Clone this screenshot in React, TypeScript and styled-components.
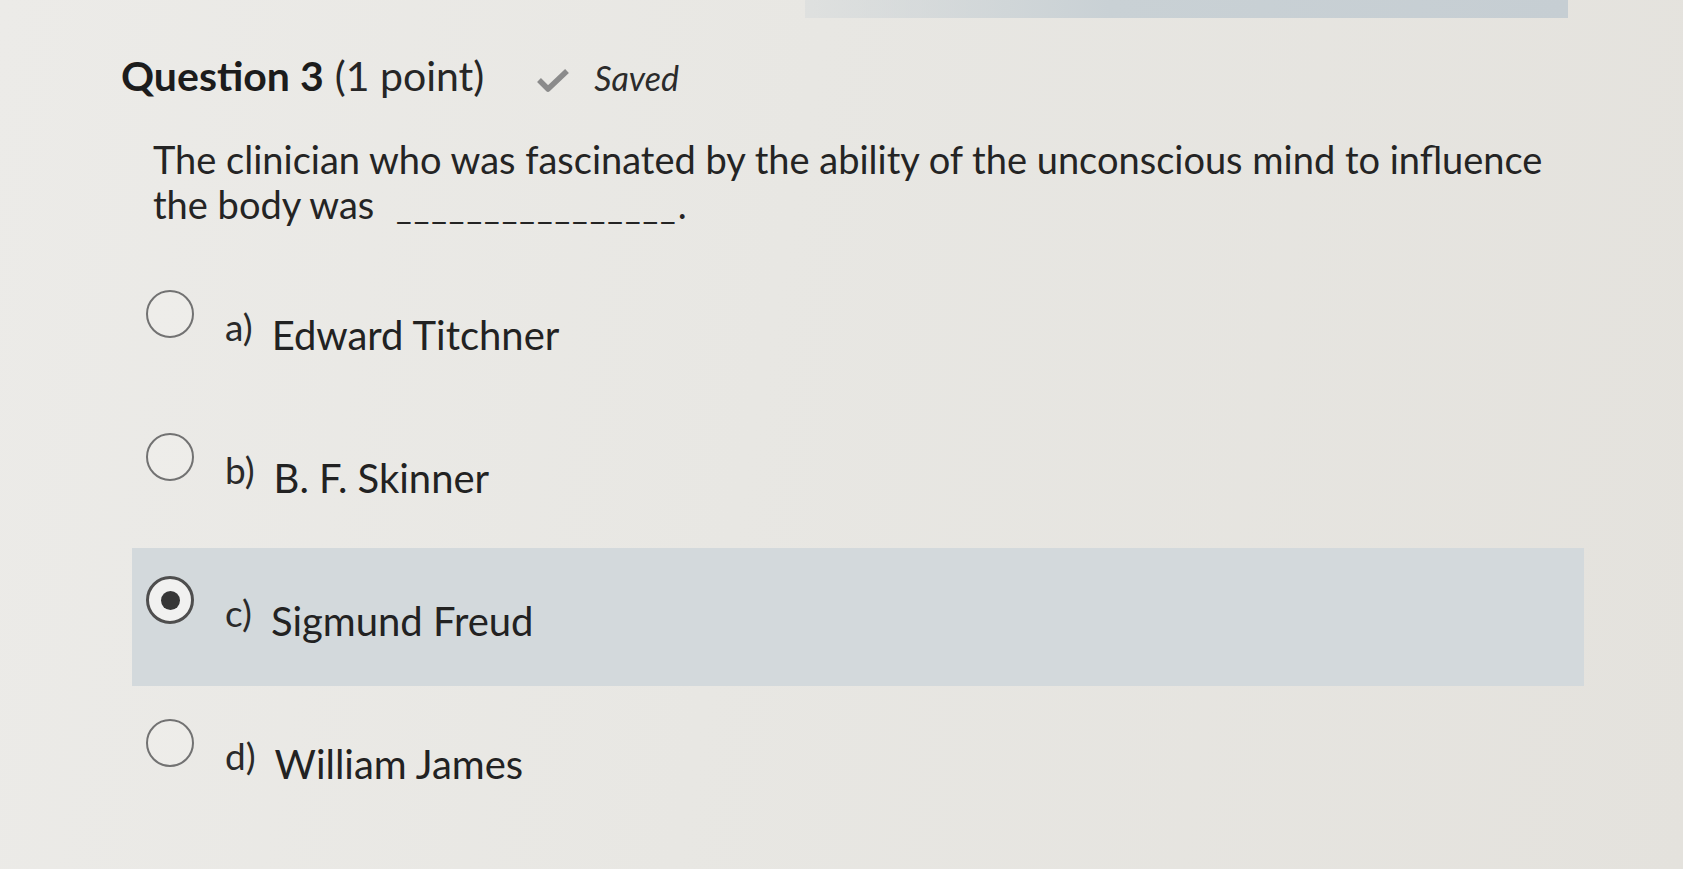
import { FC } from 'react';
import styled, { createGlobalStyle } from 'styled-components';

interface Choice {
  letter: string;
  name: string;
  selected?: boolean;
}

const choices: Choice[] = [
  { letter: 'a)', name: 'Edward Titchner' },
  { letter: 'b)', name: 'B. F. Skinner' },
  { letter: 'c)', name: 'Sigmund Freud', selected: true },
  { letter: 'd)', name: 'William James' },
];

const GlobalStyle = createGlobalStyle`
  html, body {
    margin: 0;
    padding: 0;
  }
  body {
    font-family: Lato, 'Noto Sans', 'Liberation Sans', sans-serif;
    color: #232323;
  }
`;

const CheckIcon: FC = () => (
  <svg width='34' height='26' viewBox='0 0 34 26' fill='none'>
    <polyline points='3,13 12,22 31,4' stroke='#8b8b8b' strokeWidth='5.5' strokeLinejoin='round' />
  </svg>
);

const App: FC = () => {
  return (
    <Page>
      <GlobalStyle />
      <PrevBand />
      <Content>
        <Header>
          <Title>Question 3</Title>
          <Points>(1 point)</Points>
          <Status>
            <CheckIcon />
            <SavedText>Saved</SavedText>
          </Status>
        </Header>

        <QuestionText>
          The clinician who was fascinated by the ability of the unconscious mind to influence
          <br />
          the body was <Blank>________________</Blank>.
        </QuestionText>

        <Options>
          {choices.map((c) => (
            <Row key={c.letter} selected={!!c.selected}>
              <Radio selected={!!c.selected}>{c.selected && <Dot />}</Radio>
              <Letter>{c.letter}</Letter>
              <Name>{c.name}</Name>
            </Row>
          ))}
        </Options>
      </Content>
    </Page>
  );
};

const Page = styled.div`
  min-height: 100vh;
  box-sizing: border-box;
  background: linear-gradient(100deg, #ecebe8 0%, #e8e7e3 45%, #e4e2dd 100%);
  overflow: hidden;
`;

const PrevBand = styled.div`
  height: 18px;
  width: 763px;
  margin-left: 805px;
  background: linear-gradient(90deg, rgba(205, 212, 216, 0.35) 0%, #c9d1d5 40%, #c6ced3 100%);
`;

const Content = styled.div`
  padding-left: 121px;
`;

const Header = styled.div`
  display: flex;
  align-items: baseline;
  padding-top: 37px;
  font-size: 41px;
  line-height: 1;
`;

const Title = styled.span`
  font-weight: 700;
  color: #1c1c1c;
`;

const Points = styled.span`
  margin-left: 11px;
  color: #262626;
`;

const Status = styled.span`
  display: inline-flex;
  align-items: baseline;
  margin-left: 52px;

  svg {
    position: relative;
    top: 2px;
  }
`;

const SavedText = styled.span`
  margin-left: 24px;
  font-size: 34px;
  font-style: italic;
  color: #2b2b2b;
`;

const QuestionText = styled.p`
  margin: 41px 0 0 32px;
  font-size: 38px;
  line-height: 45px;
  color: #242424;
`;

const Blank = styled.span`
  margin-left: 12px;
  font-size: 34px;
  letter-spacing: 2px;
`;

const Options = styled.div`
  margin: 34px 0 0 11px;
  width: 1452px;
  display: flex;
  flex-direction: column;
  gap: 5px;
`;

const Row = styled.div<{ selected: boolean }>`
  height: 138px;
  display: flex;
  align-items: flex-start;
  padding-left: 14px;
  background: ${({ selected }) => (selected ? '#d3d9dc' : 'transparent')};
`;

const Radio = styled.div<{ selected: boolean }>`
  width: 48px;
  height: 48px;
  margin-top: 28px;
  box-sizing: border-box;
  border-radius: 50%;
  border: ${({ selected }) => (selected ? '3px solid #4e4e4e' : '2.5px solid #727272')};
  background: ${({ selected }) => (selected ? '#f1f1f0' : 'rgba(255,255,255,0.15)')};
  display: flex;
  align-items: center;
  justify-content: center;
  flex-shrink: 0;
`;

const Dot = styled.div`
  width: 19px;
  height: 19px;
  border-radius: 50%;
  background: #363636;
`;

const Letter = styled.span`
  margin: 46px 0 0 31px;
  font-size: 37px;
  line-height: 1;
  color: #2a2a2a;
`;

const Name = styled.span`
  margin: 53px 0 0 19px;
  font-size: 40px;
  line-height: 1;
  color: #222;
`;

export default App;
